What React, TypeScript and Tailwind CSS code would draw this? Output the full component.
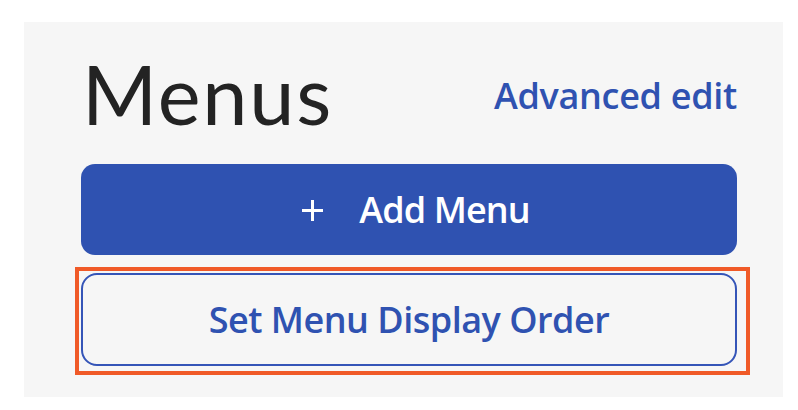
import React from 'react'

export default function App() {
  return (
    <div className="w-[798px] h-[410px] bg-white pt-[22px] pl-[24px]">
      <div className="w-[759px] h-[375px] bg-[#f6f6f6] pl-[57px] pt-[31px]">
        {/* Header */}
        <div className="w-[656px] flex items-center justify-between">
          <h1 className="ml-[1px] text-[81px] leading-none font-normal text-[#232323] font-['Lato',sans-serif] tracking-[1.8px]">
            Menus
          </h1>
          <a className="text-[36px] leading-none font-semibold text-[#2f52b1] font-['Open_Sans',sans-serif] tracking-[-0.3px] mt-[4px]">
            Advanced edit
          </a>
        </div>

        {/* Add Menu */}
        <button className="mt-[30px] w-[656px] h-[91px] rounded-[14px] bg-[#2f52b1] text-white flex items-center justify-center pl-[14px] font-['Open_Sans',sans-serif] font-semibold text-[36px] leading-none">
          <svg width="21" height="21" viewBox="0 0 21 21" className="mr-[36px] mt-[2px]">
            <path d="M10.5 0v21M0 10.5h21" stroke="white" strokeWidth="3" />
          </svg>
          <span className="tracking-[-0.9px]">Add Menu</span>
        </button>

        {/* Set Menu Display Order (highlighted) */}
        <div className="relative mt-[18px] w-[656px]">
          <button className="w-full h-[93px] rounded-[16px] border-2 border-[#3555b8] text-[#2f52b1] flex items-center justify-center font-['Open_Sans',sans-serif] font-semibold text-[36px] leading-none tracking-[-0.5px]">
            Set Menu Display Order
          </button>
          <div className="absolute -left-[6px] -top-[6px] -right-[13px] -bottom-[9px] border-4 border-[#f05a28] pointer-events-none" />
        </div>
      </div>
    </div>
  )
}
